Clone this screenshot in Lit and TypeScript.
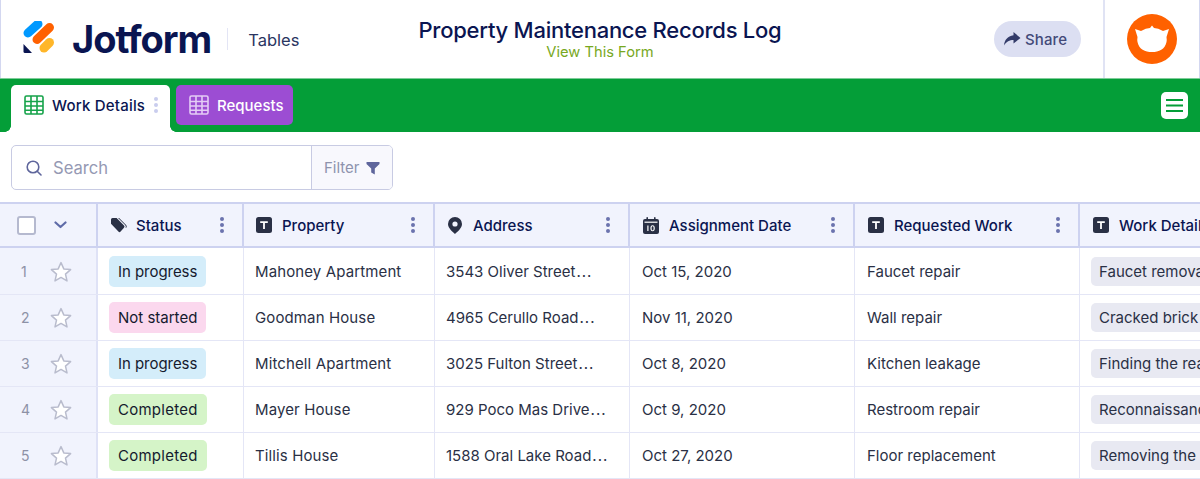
import { LitElement, html, css } from "lit";
import { customElement } from "lit/decorators.js";

const gridIcon = (c: string) => html`<svg class="gi" width="20" height="20" viewBox="0 0 20 20" fill="none" stroke=${c} stroke-width="1.6"><rect x="1" y="1" width="18" height="18" rx="1.5"/><path d="M1 6.5H19M1 11H19M1 15.2H19M7 1V19M13 1V19"/></svg>`;
const dots = (c = "#6b73ae") => html`<svg class="dots" width="4" height="16" viewBox="0 0 4 16" fill=${c}><circle cx="2" cy="2" r="2"/><circle cx="2" cy="8" r="2"/><circle cx="2" cy="14" r="2"/></svg>`;
const textIcon = html`<svg width="16" height="16" viewBox="0 0 16 16"><rect width="16" height="16" rx="2.5" fill="#2a3045"/><path d="M4.2 4.2H11.8V6H8.9V12H7.1V6H4.2Z" fill="#fff"/></svg>`;
const tagIcon = html`<svg width="17" height="17" viewBox="0 0 17 17" fill="#2a3045"><path d="M1 2.5 A1.5 1.5 0 0 1 2.5 1H6.6L14 8.6A1.6 1.6 0 0 1 14 10.8L10.6 14.6A1.5 1.5 0 0 1 8.4 14.6L1 6.8Z"/><path d="M8.6 1 L15.6 8 A2.2 2.2 0 0 1 16 10.6" fill="none" stroke="#2a3045" stroke-width="1"/></svg>`;
const pinIcon = html`<svg width="14" height="17" viewBox="0 0 14 17"><path fill-rule="evenodd" fill="#2a3045" d="M7 0A7 7 0 0 1 14 7C14 11 9.5 14.8 7 17C4.5 14.8 0 11 0 7A7 7 0 0 1 7 0ZM7 4.4A2.6 2.6 0 1 0 7 9.6A2.6 2.6 0 0 0 7 4.4Z"/></svg>`;
const calIcon = html`<svg width="16" height="17" viewBox="0 0 16 17"><rect y="2" width="16" height="15" rx="2" fill="#2a3045"/><rect x="1.5" y="4.6" width="13" height="1.2" fill="#fff"/><rect x="3.4" y="0" width="1.6" height="3.6" rx=".8" fill="#2a3045"/><rect x="11" y="0" width="1.6" height="3.6" rx=".8" fill="#2a3045"/><path d="M4.3 8.4H5.5V14H4.3ZM9.6 8.2C11 8.2 11.8 9.2 11.8 11.2C11.8 13.2 11 14.2 9.6 14.2C8.2 14.2 7.4 13.2 7.4 11.2C7.4 9.2 8.2 8.2 9.6 8.2ZM9.6 9.2C8.9 9.2 8.6 9.8 8.6 11.2C8.6 12.6 8.9 13.2 9.6 13.2C10.3 13.2 10.6 12.6 10.6 11.2C10.6 9.8 10.3 9.2 9.6 9.2Z" fill="#fff"/></svg>`;
const star = html`<svg width="22" height="22" viewBox="0 0 22 22" fill="#fff" stroke="#b9bccd" stroke-width="1.5" stroke-linejoin="round"><path d="M11 1.6L13.8 7.9L20.6 8.6L15.5 13.1L17 19.9L11 16.4L5 19.9L6.5 13.1L1.4 8.6L8.2 7.9Z"/></svg>`;

type Col = { key: string; icon: unknown; cls: string };
const cols: Col[] = [
  { key: "Status", icon: tagIcon, cls: "c-status" },
  { key: "Property", icon: textIcon, cls: "c-prop" },
  { key: "Address", icon: pinIcon, cls: "c-addr" },
  { key: "Assignment Date", icon: calIcon, cls: "c-date" },
  { key: "Requested Work", icon: textIcon, cls: "c-req" },
  { key: "Work Details", icon: textIcon, cls: "c-det" },
];

const rows = [
  ["In progress", "prog", "Mahoney Apartment", "3543 Oliver Street", "Oct 15, 2020", "Faucet repair", "Faucet removal"],
  ["Not started", "not", "Goodman House", "4965 Cerullo Road", "Nov 11, 2020", "Wall repair", "Cracked brick"],
  ["In progress", "prog", "Mitchell Apartment", "3025 Fulton Street", "Oct 8, 2020", "Kitchen leakage", "Finding the real"],
  ["Completed", "done", "Mayer House", "929 Poco Mas Drive", "Oct 9, 2020", "Restroom repair", "Reconnaissance"],
  ["Completed", "done", "Tillis House", "1588 Oral Lake Road", "Oct 27, 2020", "Floor replacement", "Removing the"],
];

@customElement("app-root")
export class AppRoot extends LitElement {
  static styles = css`
    :host { display: block; width: 1200px; height: 479px; overflow: hidden; background: #fff; font-family: Inter, "Liberation Sans", sans-serif; color: #0a1551; }
    * { box-sizing: border-box; }
    header { height: 78px; display: grid; grid-template-columns: 1fr auto 1fr; border-left: 1px solid #d3d7f0; border-right: 1px solid #d3d7f0; }
    .left { display: flex; align-items: center; padding-left: 22px; }
    .logo-text { font-size: 38px; font-weight: 700; letter-spacing: -1px; margin-left: 16px; line-height: 1; color: #0a1551; }
    .sep { width: 1px; height: 22px; background: #e3e5f5; margin-left: 16px; }
    .tables { font-size: 16.5px; margin: 2px 0 0 20px; color: #2a3561; }
    .center { display: flex; flex-direction: column; align-items: center; padding-top: 17px; }
    .title { font-size: 22px; font-weight: 500; line-height: 26px; color: #0a1551; letter-spacing: -.25px; white-space: nowrap; }
    .view { font-size: 14.7px; line-height: 18px; color: #78a81e; }
    .right { display: flex; justify-content: flex-end; align-items: stretch; }
    .share { align-self: flex-start; margin-top: 21px; width: 87px; height: 36px; border-radius: 18px; background: #dcdff2; display: flex; align-items: center; padding-left: 9px; gap: 4px; font-size: 15px; font-weight: 500; letter-spacing: .1px; color: #434a79; margin-right: 22px; }
    .avatar { width: 96px; border-left: 2px solid #e0e3f4; display: flex; align-items: flex-start; padding: 14px 0 0 22px; }
    .bar { height: 54px; background: #049e38; border-top: 1px solid #7fcc9a; display: flex; align-items: flex-start; padding: 6px 12px 0 11px; }
    .tab { display: flex; align-items: center; font-size: 15px; font-weight: 500; }
    .tab.on { position: relative; width: 159px; height: 47px; background: #fff; border-radius: 5px 5px 0 0; padding: 0 12px 7px 13px; color: #0a1551; margin-right: 6px; }
    .tab.on::before, .tab.on::after { content: ""; position: absolute; bottom: 0; width: 6px; height: 6px; }
    .tab.on::before { left: -6px; background: radial-gradient(circle at 0 0, #049e38 5.5px, #fff 6px); }
    .tab.on::after { right: -6px; background: radial-gradient(circle at 100% 0, #049e38 5.5px, #fff 6px); }
    .tab.on span { margin-left: 8px; flex: 1; white-space: nowrap; letter-spacing: .2px; }
    .tab.off { width: 117px; height: 40px; background: #9c4dd3; border-radius: 5px; padding-left: 13px; color: #fff; }
    .tab.off span { margin-left: 8px; }
    .spacer { flex: 1; }
    .menu { margin-top: 7px; width: 27px; height: 27px; background: #fff; border-radius: 5px; display: flex; align-items: center; justify-content: center; }
    .tools { height: 70px; padding: 13px 0 0 11px; }
    .search { display: flex; width: 382px; height: 45px; border: 1px solid #c8cbe3; border-radius: 5px; overflow: hidden; }
    .q { flex: 1; display: flex; align-items: center; padding-left: 14px; gap: 11px; font-size: 16.6px; color: #9599b3; }
    .filter { width: 81px; border-left: 1px solid #c8cbe3; background: #f8f8fd; display: flex; align-items: center; padding-left: 12px; gap: 6px; font-size: 15px; color: #8e93ad; }
    .row { display: grid; grid-template-columns: 98px 146px 191px 195px 225px 225px 1fr; }
    .head { height: 46px; background: #f1f3fd; border-top: 2px solid #cdd2f0; border-bottom: 2px solid #cdd2f0; }
    .head .cell { border-right: 2px solid #cdd2f0; display: flex; align-items: center; padding: 0 18px 0 12px; font-size: 15px; font-weight: 500; color: #0a1551; min-width: 0; }
    .head svg { flex-shrink: 0; }
    .head .cell:last-child { border-right: 0; padding: 0 0 0 13px; overflow: hidden; }
    .head .c-addr, .head .c-date, .head .c-req { padding-left: 13px; }
    .head .name { margin-left: 10px; flex: 1; white-space: nowrap; }
    .head .c-status .name { margin-left: 9px; }
    .head .c-addr .name { margin-left: 11px; }
    .head .first { padding: 0 0 0 17px; }
    .cb { width: 19px; height: 19px; flex-shrink: 0; background: #fff; border: 2px solid #b5b9cf; border-radius: 3px; }
    .chev { margin-left: 18px; }
    .body { height: 46px; border-bottom: 1px solid #e4e6f6; }
    .head + .body { height: 47px; }
    .body .cell { border-right: 1px solid #e4e6f6; display: flex; align-items: center; padding: 0 0 0 11px; font-size: 15px; color: #2a3045; white-space: nowrap; overflow: hidden; min-width: 0; }
    .body .cell:last-child { border-right: 0; }
    .body .first { background: #f1f3fd; border-right: 2px solid #dfe2f6; padding: 0 0 0 21px; color: #8d91a6; font-size: 14px; }
    .body .c-date, .body .c-req { padding-left: 12px; }
    .body .c-prop { letter-spacing: .12px; }
    .head + .body .cell { padding-top: 1px; }
    .num { width: 29px; }
    .pill { display: inline-flex; align-items: center; height: 31px; padding: 0 9px; border-radius: 5px; color: #141a2e; }
    .prog { background: #d4edfa; letter-spacing: -.05px; }
    .not { background: #fbd8ee; }
    .done { background: #d5f4c8; letter-spacing: .25px; }
    .det { display: flex; align-items: center; height: 29px; padding-left: 8px; flex: 1; background: #e8e9f2; border-radius: 5px 0 0 5px; }
    .ell { letter-spacing: 1px; margin-left: 1px; }
  `;

  render() {
    return html`
      <header>
        <div class="left">
          <svg width="33" height="36" viewBox="0 0 33 36">
            <path d="M5 12 L15 3" stroke="#0099ff" stroke-width="9" stroke-linecap="round"/>
            <path d="M14 18.5 L26.5 6.5" stroke="#ff6100" stroke-width="9" stroke-linecap="round"/>
            <path d="M21 27 L26.5 21.5" stroke="#ffb629" stroke-width="9" stroke-linecap="round"/>
            <path d="M0.5 23 L9 32 H2 A1.5 1.5 0 0 1 0.5 30.5Z" fill="#0a1551"/>
          </svg>
          <div class="logo-text">Jotform</div>
          <div class="sep"></div>
          <div class="tables">Tables</div>
        </div>
        <div class="center">
          <div class="title">Property Maintenance Records Log</div>
          <div class="view">View This Form</div>
        </div>
        <div class="right">
          <div class="share">
            <svg width="18" height="14" viewBox="0 0 17 14" fill="#343c6a"><path d="M10 0L17 6L10 11.5V8C6 8 3 9.5 0.5 13.5C1 8 4 4 10 3.2Z"/></svg>
            Share
          </div>
          <div class="avatar">
            <svg width="50" height="50" viewBox="0 0 50 50">
              <circle cx="25" cy="25" r="25" fill="#ff6100"/>
              <path fill="#fff" d="M8 15 L14 17 Q19 14 23 14 L25 11.5 L27 14 Q31 14 36 17 L42 15 L39.5 23 A15.5 15.5 0 0 1 39.5 28 C38 35.5 32 38 25 38 C18 38 12 35.5 10.5 28 A15.5 15.5 0 0 1 10.5 23 Z"/>
            </svg>
          </div>
        </div>
      </header>
      <div class="bar">
        <div class="tab on">${gridIcon("#16a34a")}<span>Work Details</span>${dots("#c9cdee")}</div>
        <div class="tab off">${gridIcon("#e4ccf5")}<span>Requests</span></div>
        <div class="spacer"></div>
        <div class="menu">
          <svg width="17" height="13" viewBox="0 0 17 13" fill="#049e38"><rect width="17" height="2"/><rect y="5.5" width="17" height="2"/><rect y="11" width="17" height="2"/></svg>
        </div>
      </div>
      <div class="tools">
        <div class="search">
          <div class="q">
            <svg width="16" height="16" viewBox="0 0 16 16" fill="none" stroke="#5f669c" stroke-width="1.6"><circle cx="7" cy="7" r="5.8"/><path d="M11.2 11.2L15 15" stroke-linecap="round"/></svg>
            Search
          </div>
          <div class="filter">Filter
            <svg width="14" height="14" viewBox="0 0 14 14" fill="#5f669c"><path d="M0.5 1H13.5V3L8.8 7.5V13.5L5.2 11.5V7.5L0.5 3Z"/></svg>
          </div>
        </div>
      </div>
      <div class="row head">
        <div class="cell first">
          <div class="cb"></div>
          <svg class="chev" width="13" height="8" viewBox="0 0 13 8" fill="none" stroke="#5f6ba8" stroke-width="2.2" stroke-linecap="round" stroke-linejoin="round"><path d="M1.5 1.5L6.5 6L11.5 1.5"/></svg>
        </div>
        ${cols.map((c) => html`<div class="cell ${c.cls}">${c.icon}<span class="name">${c.key}</span>${c.key === "Work Details" ? "" : dots()}</div>`)}
      </div>
      ${rows.map((r, i) => html`
        <div class="row body">
          <div class="cell first"><span class="num">${i + 1}</span>${star}</div>
          <div class="cell"><span class="pill ${r[1]}">${r[0]}</span></div>
          <div class="cell c-prop">${r[2]}</div>
          <div class="cell"><span>${r[3]}<span class="ell">...</span></span></div>
          <div class="cell c-date">${r[4]}</div>
          <div class="cell c-req">${r[5]}</div>
          <div class="cell"><div class="det">${r[6]}</div></div>
        </div>`)}
    `;
  }
}
